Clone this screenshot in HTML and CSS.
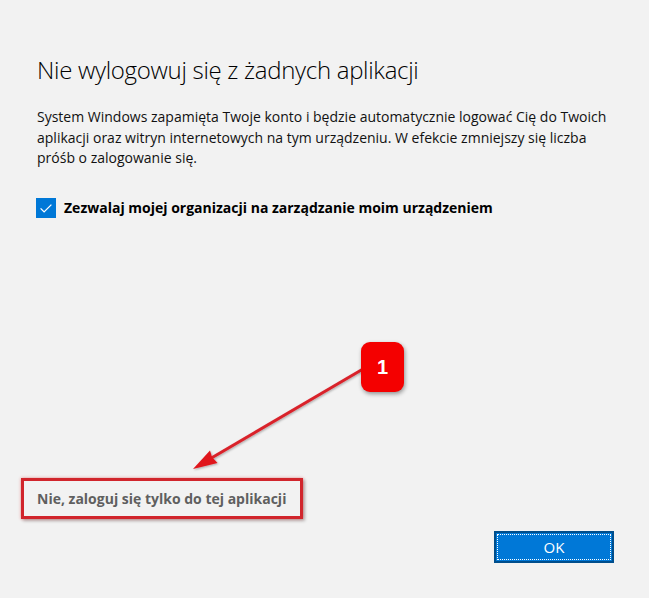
FILE: index.html
```html
<!DOCTYPE html>
<html>
<head>
    <link rel="stylesheet" href="styles.css">
</head>
<body>

<div class="dialog">
    <div class="content">
        <h1>Nie wylogowuj się z żadnych aplikacji</h1>
        <p class="info">System Windows zapamięta Twoje konto i będzie automatycznie logować Cię do Twoich aplikacji oraz witryn internetowych na tym urządzeniu. W efekcie zmniejszy się liczba próśb o zalogowanie się.</p>

        <label class="check">
            <span class="box">
                <svg width="20" height="20" viewBox="0 0 20 20">
                    <path d="M4.6 10.4 L8.1 13.9 L15.4 6.6" fill="none" stroke="#fff" stroke-width="1.3"/>
                </svg>
            </span>
            <span class="check-label">Zezwalaj mojej organizacji na zarządzanie moim urządzeniem</span>
        </label>
    </div>

    <!-- highlighted link -->
    <div class="highlight">
        <a href="#" class="app-only">Nie, zaloguj się tylko do tej aplikacji</a>
    </div>

    <div class="footer">
        <button type="button" class="ok"><span class="focus">OK</span></button>
    </div>
</div>

<!-- annotation overlay -->
<svg class="arrow" width="649" height="598" viewBox="0 0 649 598">
    <defs>
        <filter id="soft" x="-10%" y="-10%" width="120%" height="120%">
            <feDropShadow dx="1" dy="1" stdDeviation="1.2" flood-color="#000" flood-opacity="0.3"/>
        </filter>
    </defs>
    <g filter="url(#soft)">
        <line x1="363" y1="369" x2="208" y2="460" stroke="#d9232b" stroke-width="3"/>
        <polygon points="193,469 217.5,463 212,457 210,450.5" fill="#e0151c"/>
    </g>
</svg>
<div class="badge">1</div>

</body>
</html>
```

FILE: styles.css
```css
/* General Styling */
body {
    font-family: "Open Sans", "Noto Sans", sans-serif;
    margin: 0;
    padding: 0;
    background-color: #f2f2f2;
    color: #000;
}

.dialog {
    height: 598px;
    display: flex;
    flex-direction: column;
    box-sizing: border-box;
    padding: 0 35px 35px 37px;
}

.content {
    flex: 1;
}

h1 {
    font-size: 24px;
    font-weight: 300;
    letter-spacing: -0.3px;
    line-height: 32px;
    margin: 54px 0 0 0;
    color: #000;
}

.info {
    font-size: 14px;
    line-height: 20.5px;
    margin: 21px 0 0 0;
    color: #111;
}

.check {
    display: flex;
    align-items: center;
    gap: 8px;
    margin-top: 29px;
    margin-left: -1px;
}

.check .box {
    width: 20px;
    height: 20px;
    background-color: #0078d7;
    display: block;
}

.check .box svg {
    display: block;
}

.check-label {
    font-size: 14px;
    font-weight: bold;
}

.highlight {
    align-self: flex-start;
    margin-left: -16px;
    padding: 0 14px 0 13px;
    height: 35px;
    display: flex;
    align-items: center;
    border: 3px solid #d1252c;
    box-shadow: 0 0 3px rgba(220, 30, 30, 0.45), 2px 2px 3px rgba(0, 0, 0, 0.25);
}

.app-only {
    font-size: 14px;
    font-weight: bold;
    color: #5f5f5f;
    text-decoration: none;
}

.footer {
    display: flex;
    justify-content: flex-end;
    margin-top: 12px;
}

button.ok {
    width: 120px;
    height: 32px;
    padding: 1px;
    border: 2px solid #004e8c;
    background-color: #0078d7;
    cursor: pointer;
    display: flex;
}

.ok .focus {
    flex: 1;
    border: 1px dotted #fff;
    color: #fff;
    font-family: "Open Sans", "Noto Sans", sans-serif;
    font-size: 15px;
    display: flex;
    align-items: center;
    justify-content: center;
}

/* annotation */
.arrow {
    position: absolute;
    top: 0;
    left: 0;
    pointer-events: none;
}

.badge {
    position: absolute;
    left: 361px;
    top: 342px;
    width: 43px;
    height: 50px;
    border-radius: 9px;
    background-color: #f40000;
    box-shadow: 1px 2px 4px rgba(0, 0, 0, 0.4);
    color: #fff;
    font-family: "Liberation Sans", Arial, sans-serif;
    font-weight: bold;
    font-size: 20px;
    display: flex;
    align-items: center;
    justify-content: center;
}
```
